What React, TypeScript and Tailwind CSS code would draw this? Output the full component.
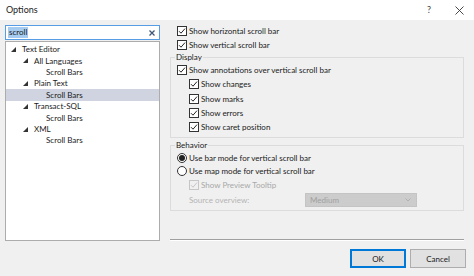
import React from "react";

type TreeNode = { label: string; level: 0 | 1 | 2; open?: boolean; selected?: boolean };

const tree: TreeNode[] = [
  { label: "Text Editor", level: 0, open: true },
  { label: "All Languages", level: 1, open: true },
  { label: "Scroll Bars", level: 2 },
  { label: "Plain Text", level: 1, open: true },
  { label: "Scroll Bars", level: 2, selected: true },
  { label: "Transact-SQL", level: 1, open: true },
  { label: "Scroll Bars", level: 2 },
  { label: "XML", level: 1, open: true },
  { label: "Scroll Bars", level: 2 },
];

const indent = { 0: "pl-[4px]", 1: "pl-[16px]", 2: "pl-[28px]" };

function Check({ disabled }: { disabled?: boolean }) {
  return (
    <span
      className={
        "w-[10px] h-[10px] shrink-0 flex items-center justify-center border " +
        (disabled ? "border-[#c6c6c6] bg-[#f0f0f0]" : "border-[#333333] bg-white")
      }
    >
      <svg width="8" height="8" viewBox="0 0 8 8">
        <path
          d="M1 4.2 L3 6.2 L7 1.6"
          fill="none"
          stroke={disabled ? "#c6c6c6" : "#222"}
          strokeWidth="1"
        />
      </svg>
    </span>
  );
}

function Radio({ on }: { on?: boolean }) {
  return (
    <span className="w-[10px] h-[10px] shrink-0 rounded-full border border-[#333333] bg-white flex items-center justify-center">
      {on && <span className="w-[6px] h-[6px] rounded-full bg-[#222]" />}
    </span>
  );
}

function Row({ children, className }: { children: React.ReactNode; className: string }) {
  return <div className={"flex items-center gap-[2px] " + className}>{children}</div>;
}

export default function App() {
  return (
    <div
      className="w-[474px] h-[276px] bg-[#f0f0f0] flex flex-col text-[8px] text-[#1a1a1a] overflow-hidden"
      style={{ fontFamily: "Lato, 'Noto Sans', sans-serif" }}
    >
      {/* title bar */}
      <div className="h-[20px] bg-white flex items-center pl-[6px] pr-[10px] shrink-0">
        <span className="text-[9px] text-[#222]">Options</span>
        <span className="ml-auto text-[9px] text-[#444] mr-[24px]">?</span>
        <svg width="9" height="9" viewBox="0 0 9 9">
          <path d="M0.5 0.5 L8.5 8.5 M8.5 0.5 L0.5 8.5" stroke="#333" strokeWidth="0.9" />
        </svg>
      </div>

      <div className="flex h-[221px] shrink-0">
        {/* left: search + tree */}
        <div className="w-[155px] ml-[5px] pt-[5px] flex flex-col gap-[1px]">
          <div className="h-[15px] border border-[#569de5] bg-white flex items-center pl-[2px] pr-[4px]">
            <span className="bg-[#a6cbf0] px-[1px] leading-[11px]">scroll</span>
            <svg className="ml-auto" width="6" height="6" viewBox="0 0 6 6">
              <path d="M0.5 0.5 L5.5 5.5 M5.5 0.5 L0.5 5.5" stroke="#3f5877" strokeWidth="1.3" />
            </svg>
          </div>
          <div className="flex-1 border border-[#acacac] bg-white pt-[1.6px]">
            {tree.map((n, i) => (
              <div
                key={i}
                className={
                  "h-[11.4px] flex items-center " +
                  indent[n.level] +
                  (n.selected ? " bg-[#cfd4e0]" : "")
                }
              >
                <span className="w-[12px] flex items-center pl-[1px]">
                  {n.open && (
                    <svg width="5" height="5" viewBox="0 0 5 5">
                      <polygon points="5,0 5,5 0,5" fill="#333" />
                    </svg>
                  )}
                </span>
                <span>{n.label}</span>
              </div>
            ))}
          </div>
        </div>

        {/* right: options */}
        <div className="w-[294px] ml-[10px] pt-[4px] flex flex-col">
          <Row className="h-[14px] pl-[7px]">
            <Check />
            <span>Show horizontal scroll bar</span>
          </Row>
          <Row className="h-[14px] pl-[7px]">
            <Check />
            <span>Show vertical scroll bar</span>
          </Row>

          <fieldset className="border border-[#dcdcdc] pb-[3px]">
            <legend className="ml-[4px] px-[1px] leading-[11px]">Display</legend>
            <Row className="h-[14.3px] pl-[6px]">
              <Check />
              <span>Show annotations over vertical scroll bar</span>
            </Row>
            {["Show changes", "Show marks", "Show errors", "Show caret position"].map((t) => (
              <Row key={t} className="h-[14.3px] pl-[18px]">
                <Check />
                <span>{t}</span>
              </Row>
            ))}
          </fieldset>

          <fieldset className="border border-[#dcdcdc] pb-[3px] mt-[2px]">
            <legend className="ml-[4px] px-[1px] leading-[11px]">Behavior</legend>
            <Row className="h-[13px] pl-[6px]">
              <Radio on />
              <span>Use bar mode for vertical scroll bar</span>
            </Row>
            <Row className="h-[14px] pl-[6px]">
              <Radio />
              <span>Use map mode for vertical scroll bar</span>
            </Row>
            <Row className="h-[14px] pl-[18px] text-[#a8a8a8]">
              <Check disabled />
              <span>Show Preview Tooltip</span>
            </Row>
            <div className="h-[15px] pl-[18px] flex items-center text-[#b4b4b4]">
              <span>Source overview:</span>
              <div className="ml-auto mr-[46px] w-[112px] h-[14px] bg-[#cccccc] border border-[#c4c4c4] flex items-center pl-[4px] pr-[5px] text-[#a0a0a0]">
                <span>Medium</span>
                <svg className="ml-auto" width="6" height="4" viewBox="0 0 6 4">
                  <path d="M0.5 0.5 L3 3 L5.5 0.5" fill="none" stroke="#a8a8a8" strokeWidth="0.8" />
                </svg>
              </div>
            </div>
          </fieldset>

          <div className="mt-auto border-t border-[#a0a0a0] border-b border-b-white" />
        </div>
      </div>

      {/* buttons */}
      <div className="flex justify-end gap-[4px] pt-[8px] pr-[8px]">
        <button className="w-[56px] h-[19px] bg-[#e1e1e1] border border-[#0078d7] outline outline-1 outline-[#0078d7] -outline-offset-2 text-[8px]">
          OK
        </button>
        <button className="w-[56px] h-[19px] bg-[#e1e1e1] border border-[#adadad] text-[8px]">
          Cancel
        </button>
      </div>
    </div>
  );
}
